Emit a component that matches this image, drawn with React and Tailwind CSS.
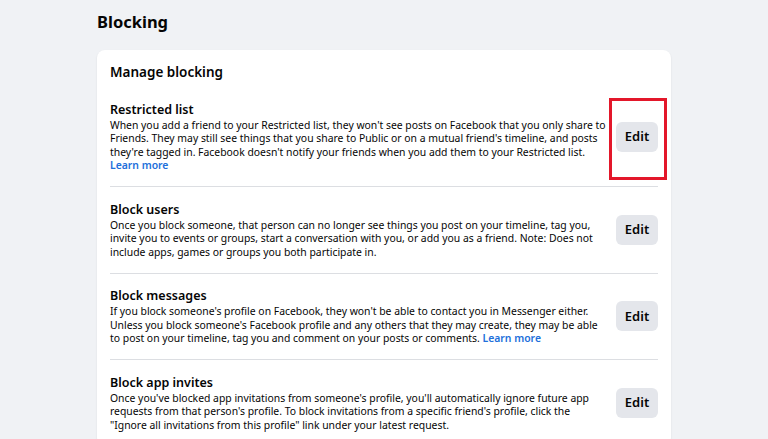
import React from 'react';

const rows = [
  {
    title: "Restricted list",
    body: "When you add a friend to your Restricted list, they won't see posts on Facebook that you only share to Friends. They may still see things that you share to Public or on a mutual friend's timeline, and posts they're tagged in. Facebook doesn't notify your friends when you add them to your Restricted list.",
    link: "block",
    highlight: true,
  },
  {
    title: "Block users",
    body: "Once you block someone, that person can no longer see things you post on your timeline, tag you, invite you to events or groups, start a conversation with you, or add you as a friend. Note: Does not include apps, games or groups you both participate in.",
  },
  {
    title: "Block messages",
    body: "If you block someone's profile on Facebook, they won't be able to contact you in Messenger either. Unless you block someone's Facebook profile and any others that they may create, they may be able to post on your timeline, tag you and comment on your posts or comments.",
    link: "inline",
  },
  {
    title: "Block app invites",
    body: "Once you've blocked app invitations from someone's profile, you'll automatically ignore future app requests from that person's profile. To block invitations from a specific friend's profile, click the \"Ignore all invitations from this profile\" link under your latest request.",
  },
];

const SettingRow = ({ row, last }) => (
  <div className={`relative flex items-center gap-[10px] py-[13.5px] ${last ? '' : 'border-b border-[#dcdee2]'}`}>
    <div className="flex-1 min-w-0">
      <div className="text-[12.5px] leading-[18px] font-semibold text-[#050505]">{row.title}</div>
      <p className="text-[10.4px] leading-[13.5px] text-[#050505]">
        {row.body}
        {row.link === 'inline' && (
          <>
            {' '}
            <span className="font-semibold text-[#216fdb]">Learn more</span>
          </>
        )}
        {row.link === 'block' && (
          <span className="block font-semibold text-[#216fdb]">Learn more</span>
        )}
      </p>
    </div>
    <button className="w-[42px] h-[30px] shrink-0 rounded-[6px] bg-[#e4e6eb] text-[13px] font-semibold text-[#050505]">
      Edit
    </button>
    {row.highlight && (
      <div className="absolute top-[11px] right-[-9px] w-[58px] h-[82px] border-[3px] border-[#e3172a]" />
    )}
  </div>
);

export default function App() {
  return (
    <div className="min-h-[439px] bg-[#f0f2f5] font-['Noto_Sans',sans-serif] overflow-hidden">
      <div className="mx-auto w-[574px]">
        <h1 className="pt-[10px] pb-[16px] text-[16.5px] leading-[24px] font-bold text-[#050505]">Blocking</h1>
        <div className="rounded-[8px] bg-white px-[13px] pt-[12px] shadow-[0_1px_2px_rgba(0,0,0,0.1)]">
          <h2 className="text-[13.5px] leading-[20px] font-semibold text-[#050505] mb-[5px]">Manage blocking</h2>
          {rows.map((row, i) => (
            <SettingRow key={row.title} row={row} last={i === rows.length - 1} />
          ))}
        </div>
      </div>
    </div>
  );
}
